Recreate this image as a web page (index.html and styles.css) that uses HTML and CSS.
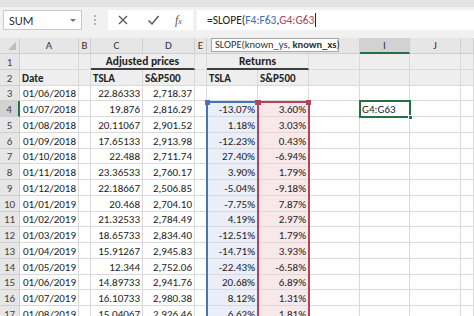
FILE: index.html
```html
<!DOCTYPE html>
<html lang="en">
<head>
    <meta charset="UTF-8">
    <title>SLOPE - Excel</title>
    <link rel="stylesheet" href="styles.css">
</head>
<body>
<div class="app">
    <div class="ribbon-edge"></div>

    <!-- formula bar -->
    <div class="fbar">
        <div class="namebox"><span>SUM</span><span class="caret"></span></div>
        <div class="grip"><i></i><i></i><i></i></div>
        <div class="fx-tools">
            <svg width="12" height="12" viewBox="0 0 12 12"><path d="M2 2 L10 10 M10 2 L2 10" stroke="#5a5a5a" stroke-width="1.4" fill="none"/></svg>
            <svg width="13" height="12" viewBox="0 0 13 12"><path d="M1.5 6.5 L5 10 L11.5 2" stroke="#5a5a5a" stroke-width="1.5" fill="none"/></svg>
            <span class="fx">f<small>x</small></span>
        </div>
        <div class="formula">=SLOPE(<span class="ref-f">F4:F63</span>,<span class="ref-g">G4:G63</span><span class="cursor"></span></div>
    </div>

    <div class="sheet">
        <!-- F, G, H labels sit under the argument tooltip -->
        <div class="row head">
            <div class="corner"></div><div class="ch">A</div><div class="ch">B</div><div class="ch">C</div><div class="ch">D</div><div class="ch">E</div><div class="ch"></div><div class="ch"></div><div class="ch"></div><div class="ch sel">I</div><div class="ch">J</div><div class="ch"></div>
        </div>
        <div class="row top">
            <div class="rh">1</div><div class="c"></div><div class="c"></div><div class="c title span2">Adjusted prices</div><div class="c"></div><div class="c title span2">Returns</div><div class="c"></div><div class="c"></div><div class="c"></div><div class="c"></div>
        </div>
        <div class="row top">
            <div class="rh">2</div><div class="c b">Date</div><div class="c"></div><div class="c b">TSLA</div><div class="c b">S&amp;P500</div><div class="c"></div><div class="c b">TSLA</div><div class="c b">S&amp;P500</div><div class="c"></div><div class="c"></div><div class="c"></div><div class="c"></div>
        </div>
        <div class="row">
            <div class="rh">3</div><div class="c r">01/06/2018</div><div class="c"></div><div class="c r">22.86333</div><div class="c r">2,718.37</div><div class="c"></div><div class="c"></div><div class="c"></div><div class="c"></div><div class="c"></div><div class="c"></div><div class="c"></div>
        </div>
        <div class="row">
            <div class="rh sel">4</div><div class="c r">01/07/2018</div><div class="c"></div><div class="c r">19.876</div><div class="c r">2,816.29</div><div class="c"></div><div class="c r rf">-13.07%</div><div class="c r rg">3.60%</div><div class="c"></div><div class="c active">G4:G63</div><div class="c"></div><div class="c"></div>
        </div>
        <div class="row">
            <div class="rh">5</div><div class="c r">01/08/2018</div><div class="c"></div><div class="c r">20.11067</div><div class="c r">2,901.52</div><div class="c"></div><div class="c r rf">1.18%</div><div class="c r rg">3.03%</div><div class="c"></div><div class="c"></div><div class="c"></div><div class="c"></div>
        </div>
        <div class="row">
            <div class="rh">6</div><div class="c r">01/09/2018</div><div class="c"></div><div class="c r">17.65133</div><div class="c r">2,913.98</div><div class="c"></div><div class="c r rf">-12.23%</div><div class="c r rg">0.43%</div><div class="c"></div><div class="c"></div><div class="c"></div><div class="c"></div>
        </div>
        <div class="row">
            <div class="rh">7</div><div class="c r">01/10/2018</div><div class="c"></div><div class="c r">22.488</div><div class="c r">2,711.74</div><div class="c"></div><div class="c r rf">27.40%</div><div class="c r rg">-6.94%</div><div class="c"></div><div class="c"></div><div class="c"></div><div class="c"></div>
        </div>
        <div class="row">
            <div class="rh">8</div><div class="c r">01/11/2018</div><div class="c"></div><div class="c r">23.36533</div><div class="c r">2,760.17</div><div class="c"></div><div class="c r rf">3.90%</div><div class="c r rg">1.79%</div><div class="c"></div><div class="c"></div><div class="c"></div><div class="c"></div>
        </div>
        <div class="row">
            <div class="rh">9</div><div class="c r">01/12/2018</div><div class="c"></div><div class="c r">22.18667</div><div class="c r">2,506.85</div><div class="c"></div><div class="c r rf">-5.04%</div><div class="c r rg">-9.18%</div><div class="c"></div><div class="c"></div><div class="c"></div><div class="c"></div>
        </div>
        <div class="row">
            <div class="rh">10</div><div class="c r">01/01/2019</div><div class="c"></div><div class="c r">20.468</div><div class="c r">2,704.10</div><div class="c"></div><div class="c r rf">-7.75%</div><div class="c r rg">7.87%</div><div class="c"></div><div class="c"></div><div class="c"></div><div class="c"></div>
        </div>
        <div class="row">
            <div class="rh">11</div><div class="c r">01/02/2019</div><div class="c"></div><div class="c r">21.32533</div><div class="c r">2,784.49</div><div class="c"></div><div class="c r rf">4.19%</div><div class="c r rg">2.97%</div><div class="c"></div><div class="c"></div><div class="c"></div><div class="c"></div>
        </div>
        <div class="row">
            <div class="rh">12</div><div class="c r">01/03/2019</div><div class="c"></div><div class="c r">18.65733</div><div class="c r">2,834.40</div><div class="c"></div><div class="c r rf">-12.51%</div><div class="c r rg">1.79%</div><div class="c"></div><div class="c"></div><div class="c"></div><div class="c"></div>
        </div>
        <div class="row">
            <div class="rh">13</div><div class="c r">01/04/2019</div><div class="c"></div><div class="c r">15.91267</div><div class="c r">2,945.83</div><div class="c"></div><div class="c r rf">-14.71%</div><div class="c r rg">3.93%</div><div class="c"></div><div class="c"></div><div class="c"></div><div class="c"></div>
        </div>
        <div class="row">
            <div class="rh">14</div><div class="c r">01/05/2019</div><div class="c"></div><div class="c r">12.344</div><div class="c r">2,752.06</div><div class="c"></div><div class="c r rf">-22.43%</div><div class="c r rg">-6.58%</div><div class="c"></div><div class="c"></div><div class="c"></div><div class="c"></div>
        </div>
        <div class="row">
            <div class="rh">15</div><div class="c r">01/06/2019</div><div class="c"></div><div class="c r">14.89733</div><div class="c r">2,941.76</div><div class="c"></div><div class="c r rf">20.68%</div><div class="c r rg">6.89%</div><div class="c"></div><div class="c"></div><div class="c"></div><div class="c"></div>
        </div>
        <div class="row">
            <div class="rh">16</div><div class="c r">01/07/2019</div><div class="c"></div><div class="c r">16.10733</div><div class="c r">2,980.38</div><div class="c"></div><div class="c r rf">8.12%</div><div class="c r rg">1.31%</div><div class="c"></div><div class="c"></div><div class="c"></div><div class="c"></div>
        </div>
        <div class="row">
            <div class="rh">17</div><div class="c r">01/08/2019</div><div class="c"></div><div class="c r">15.04067</div><div class="c r">2,926.46</div><div class="c"></div><div class="c r rf">6.62%</div><div class="c r rg">1.81%</div><div class="c"></div><div class="c"></div><div class="c"></div><div class="c"></div>
        </div>

        <!-- range outlines of the formula being edited -->
        <div class="range range-f"><i class="h hl"></i><i class="h hr"></i></div>
        <div class="range range-g"><i class="h hl"></i><i class="h hr"></i></div>
        <div class="active-box"><i></i></div>

        <div class="tip">SLOPE(known_ys, <b>known_xs</b>)</div>
    </div>
</div>
</body>
</html>
```

FILE: styles.css
```css
:root {
    --cols: 20px 59px 12px 52px 52px 12px 51px 51px 51px 50px 51px 1fr;
    --row-h: 15.75px;
    --grid: #dadada;
    --head-bg: #e6e6e6;
    --blue: #4a72b4;
    --red: #b2455a;
    --green: #217346;
}

* {
    margin: 0;
    padding: 0;
    box-sizing: border-box;
}

body {
    background: #fff;
    font-family: 'Carlito', 'Liberation Sans', sans-serif;
    color: #222;
    overflow: hidden;
}

.app {
    width: 474px;
    height: 316px;
    background: #f1f1f1;
    overflow: hidden;
}

.ribbon-edge {
    height: 7px;
    background: #e3e3e3;
}

/* formula bar */
.fbar {
    display: flex;
    align-items: center;
    height: 26px;
    padding-left: 3px;
}

.namebox {
    width: 79px;
    height: 20px;
    background: #fff;
    border: 1px solid #c9c9c9;
    display: flex;
    align-items: center;
    justify-content: space-between;
    padding: 0 5px 0 5px;
    font-size: 12.5px;
    color: #333;
}

.caret {
    width: 0;
    height: 0;
    border-left: 3px solid transparent;
    border-right: 3px solid transparent;
    border-top: 3px solid #777;
}

.grip {
    width: 26px;
    display: flex;
    flex-direction: column;
    align-items: center;
    gap: 2px;
}

.grip i {
    width: 2px;
    height: 2px;
    background: #b5b5b5;
}

.fx-tools {
    width: 85px;
    height: 20px;
    background: #fff;
    display: flex;
    align-items: center;
    gap: 17px;
    padding-left: 9px;
}

.fx-tools svg + svg {
    margin-left: 1px;
}

.fx {
    font-family: 'Liberation Serif', serif;
    font-style: italic;
    font-size: 12px;
    color: #555;
    margin-left: -2px;
}

.fx small {
    font-size: 8px;
}

.formula {
    flex: 1;
    height: 20px;
    margin-left: 4px;
    background: #fff;
    display: flex;
    align-items: center;
    padding-left: 10px;
    font-size: 11.5px;
    color: #222;
}

.ref-f { color: #3a6db5; }
.ref-g { color: #b4434f; }

.cursor {
    width: 1px;
    height: 14px;
    margin-left: 1px;
    background: #222;
}

/* sheet */
.sheet {
    position: relative;
    margin-top: 5px;
    background: #fff;
}

.row {
    display: grid;
    grid-template-columns: var(--cols);
    height: var(--row-h);
    font-size: 11px;
}

.row.head {
    height: 16px;
}

.row > div {
    border-right: 1px solid var(--grid);
    border-bottom: 1px solid var(--grid);
    display: flex;
    align-items: flex-end;
    padding: 0 2px;
    white-space: nowrap;
    overflow: hidden;
}

.head > div {
    background: var(--head-bg);
    border-color: #cfcfcf;
    justify-content: center;
    align-items: center;
    padding: 0;
    color: #333;
}

.head .sel {
    background: #d2d2d2;
    border-bottom: 2px solid var(--green);
}

.corner {
    position: relative;
}

.corner::after {
    content: "";
    position: absolute;
    right: 3px;
    bottom: 3px;
    border-left: 8px solid transparent;
    border-bottom: 8px solid #bdbdbd;
}

.row > .rh {
    background: var(--head-bg);
    border-color: #cfcfcf;
    justify-content: center;
    color: #444;
    padding: 0;
}

.row > .rh.sel {
    background: #d2d2d2;
    border-right: 2px solid var(--green);
}

.top > div { background: #eeeeee; }
.top > .rh { background: var(--head-bg); }

.title {
    grid-column: span 2;
    justify-content: center;
    font-weight: bold;
    border-bottom: 2px solid #3d3d3d !important;
    font-size: 11.5px;
}

.b { font-weight: bold; }

.r { justify-content: flex-end; }

.rf { background: #e9eef8; }
.rg { background: #f9e8ea; }

/* overlays */
.range {
    position: absolute;
    top: 63px;
    bottom: -20px;
    border: 2px solid;
}

.range-f {
    left: 206px;
    width: 53px;
    border-color: var(--blue);
}

.range-g {
    left: 257px;
    width: 53px;
    border-color: var(--red);
}

.h {
    position: absolute;
    top: -3px;
    width: 5px;
    height: 5px;
}

.hl { left: -3px; }
.hr { right: -3px; }

.range-f .h { background: var(--blue); }
.range-g .h { background: var(--red); }

.active-box {
    position: absolute;
    left: 359px;
    top: 62px;
    width: 52px;
    height: 18px;
    border: 2px solid var(--green);
}

.active-box i {
    position: absolute;
    right: -4px;
    bottom: -4px;
    width: 5px;
    height: 5px;
    background: var(--green);
    border: 1px solid #fff;
}

.tip {
    position: absolute;
    left: 211px;
    top: 0;
    width: 128px;
    height: 14px;
    background: #fff;
    border: 1px solid #a6a6a6;
    font-size: 10.5px;
    color: #333;
    padding-left: 3px;
    line-height: 12px;
    white-space: nowrap;
}
```
